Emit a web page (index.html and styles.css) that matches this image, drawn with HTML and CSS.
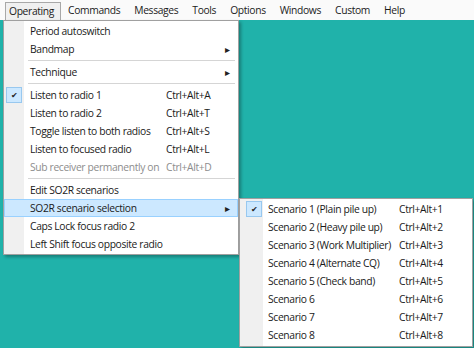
FILE: index.html
```html
<!DOCTYPE html>
<html lang="en">
<head>
    <meta charset="UTF-8">
    <title>Operating menu</title>
    <link rel="stylesheet" href="styles.css">
</head>
<body>

    <!-- Menu bar -->
    <div class="menubar">
        <div class="menubar-item open">Operating</div>
        <div class="menubar-item">Commands</div>
        <div class="menubar-item">Messages</div>
        <div class="menubar-item">Tools</div>
        <div class="menubar-item">Options</div>
        <div class="menubar-item">Windows</div>
        <div class="menubar-item">Custom</div>
        <div class="menubar-item">Help</div>
    </div>

    <div class="desktop">

        <!-- Operating dropdown -->
        <div class="menu main-menu">
            <div class="menu-row"><span class="gutter"></span><span class="label">Period autoswitch</span><span class="keys"></span><span class="arrow"></span></div>
            <div class="menu-row"><span class="gutter"></span><span class="label">Bandmap</span><span class="keys"></span><span class="arrow">&#9656;</span></div>
            <div class="menu-sep"></div>
            <div class="menu-row"><span class="gutter"></span><span class="label">Technique</span><span class="keys"></span><span class="arrow">&#9656;</span></div>
            <div class="menu-sep"></div>
            <div class="menu-row"><span class="gutter"><span class="check">&#10004;</span></span><span class="label">Listen to radio 1</span><span class="keys">Ctrl+Alt+A</span><span class="arrow"></span></div>
            <div class="menu-row"><span class="gutter"></span><span class="label">Listen to radio 2</span><span class="keys">Ctrl+Alt+T</span><span class="arrow"></span></div>
            <div class="menu-row"><span class="gutter"></span><span class="label">Toggle listen to both radios</span><span class="keys">Ctrl+Alt+S</span><span class="arrow"></span></div>
            <div class="menu-row"><span class="gutter"></span><span class="label">Listen to focused radio</span><span class="keys">Ctrl+Alt+L</span><span class="arrow"></span></div>
            <div class="menu-row disabled"><span class="gutter"></span><span class="label">Sub receiver permanently on</span><span class="keys">Ctrl+Alt+D</span><span class="arrow"></span></div>
            <div class="menu-sep"></div>
            <div class="menu-row"><span class="gutter"></span><span class="label">Edit SO2R scenarios</span><span class="keys"></span><span class="arrow"></span></div>
            <div class="menu-row hover"><span class="gutter"></span><span class="label">SO2R scenario selection</span><span class="keys"></span><span class="arrow">&#9656;</span></div>
            <div class="menu-row"><span class="gutter"></span><span class="label">Caps Lock focus radio 2</span><span class="keys"></span><span class="arrow"></span></div>
            <div class="menu-row"><span class="gutter"></span><span class="label">Left Shift focus opposite radio</span><span class="keys"></span><span class="arrow"></span></div>
        </div>

        <!-- SO2R scenario submenu -->
        <div class="menu sub-menu">
            <div class="menu-row"><span class="gutter"><span class="check">&#10004;</span></span><span class="label">Scenario 1 (Plain pile up)</span><span class="keys">Ctrl+Alt+1</span></div>
            <div class="menu-row"><span class="gutter"></span><span class="label">Scenario 2 (Heavy pile up)</span><span class="keys">Ctrl+Alt+2</span></div>
            <div class="menu-row"><span class="gutter"></span><span class="label">Scenario 3 (Work Multiplier)</span><span class="keys">Ctrl+Alt+3</span></div>
            <div class="menu-row"><span class="gutter"></span><span class="label">Scenario 4 (Alternate CQ)</span><span class="keys">Ctrl+Alt+4</span></div>
            <div class="menu-row"><span class="gutter"></span><span class="label">Scenario 5 (Check band)</span><span class="keys">Ctrl+Alt+5</span></div>
            <div class="menu-row"><span class="gutter"></span><span class="label">Scenario 6</span><span class="keys">Ctrl+Alt+6</span></div>
            <div class="menu-row"><span class="gutter"></span><span class="label">Scenario 7</span><span class="keys">Ctrl+Alt+7</span></div>
            <div class="menu-row"><span class="gutter"></span><span class="label">Scenario 8</span><span class="keys">Ctrl+Alt+8</span></div>
        </div>

    </div>

</body>
</html>
```

FILE: styles.css
```css
/* Base */
body {
    margin: 0;
    height: 348px;
    overflow: hidden;
    background-color: #20b2aa;
    font-family: 'Open Sans', 'Noto Sans', sans-serif;
    font-size: 10.3px;
    letter-spacing: -0.35px;
    color: #1a1a1a;
    display: flex;
    flex-direction: column;
}

/* Menu bar */
.menubar {
    height: 20px;
    background-color: #fafafa;
    display: flex;
    align-items: stretch;
    padding-left: 5px;
}

.menubar-item {
    padding: 0 7px;
    line-height: 21px;
    white-space: nowrap;
}

.menubar-item.open {
    margin-top: 2px;
    line-height: 17px;
    background-color: #f0f0f0;
    border: 1px solid #a8a8a8;
    border-bottom: none;
    padding: 0 6px 0 3px;
}

.desktop {
    flex: 1;
    position: relative;
}

/* Menus */
.menu {
    position: absolute;
    background-color: #fff;
    border: 1px solid #a0a0a0;
    padding: 1px 0 1px 0;
    box-shadow: 2px 2px 3px rgba(0, 0, 0, 0.3);
    background-image: linear-gradient(to right, #f0f0f0 0, #f0f0f0 20px, transparent 20px);
}

.main-menu {
    left: 3px;
    top: 0;
    width: 234px;
}

.sub-menu {
    left: 239px;
    top: 178px;
    width: 232px;
    padding-bottom: 2px;
    background-image: linear-gradient(to right, #f0f0f0 0, #f0f0f0 23px, transparent 23px);
}

.menu-row {
    height: 18px;
    display: flex;
    align-items: center;
    white-space: nowrap;
    border: 1px solid transparent;
    box-sizing: border-box;
}

.menu-row.hover {
    background-color: #cce8ff;
    border-color: #99d1ff;
}

.menu-row.disabled {
    color: #8d8d8d;
}

/* Separator */
.menu-sep {
    height: 5px;
    display: flex;
    align-items: center;
    padding-left: 24px;
    padding-right: 3px;
}

.menu-sep::after {
    content: '';
    flex: 1;
    height: 1px;
    background-color: #d5d5d5;
}

.gutter {
    width: 24px;
    height: 16px;
    flex-shrink: 0;
    display: flex;
    align-items: center;
    padding-left: 1px;
}

.check {
    width: 14px;
    height: 14px;
    background-color: #cce8ff;
    border: 1px solid #98c8ef;
    font-size: 8px;
    letter-spacing: 0;
    line-height: 14px;
    text-align: center;
    color: #222;
}

.label {
    flex: 1;
}

.main-menu .keys {
    width: 59px;
}

.sub-menu .gutter {
    width: 22px;
    padding-left: 5px;
}

.sub-menu .keys {
    width: 72px;
}

.arrow {
    width: 12px;
    font-size: 10px;
    color: #222;
}
```
